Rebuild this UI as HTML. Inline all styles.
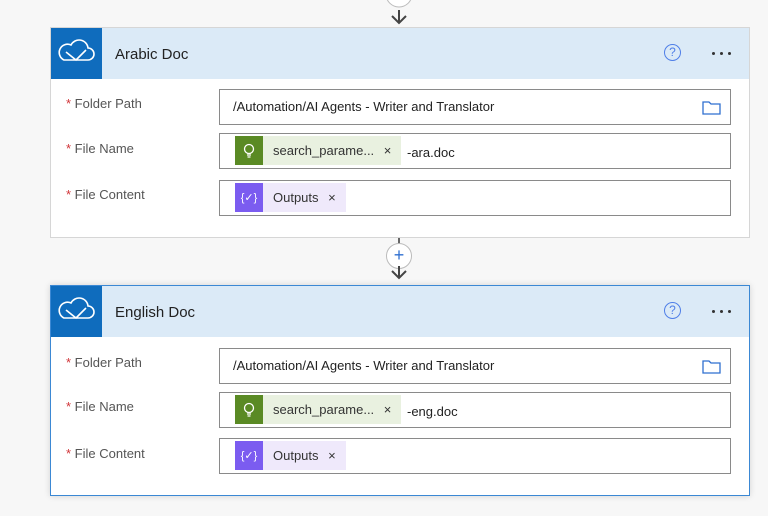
<!DOCTYPE html><html><head><style>
body{margin:0;width:768px;height:516px;background:#f7f7f7;font-family:"Liberation Sans",sans-serif;position:relative;overflow:hidden}
.card{position:absolute;left:50px;width:698px;background:#fff;border:1px solid #d6d6d6}
.card.sel{border:1px solid #3b88d4;box-shadow:0 0 6px rgba(0,0,0,.15)}
.hd{height:51px;background:#dbeaf7;position:relative}
.ic{position:absolute;left:0;top:0;width:51px;height:51px;background:#0f6cbd}
.ti{position:absolute;left:64px;top:18px;font-size:15px;color:#222}
.q{position:absolute;left:613px;top:16px;width:15px;height:15px;border:1.5px solid #4f7fe8;border-radius:50%;color:#4f7fe8;font-size:12px;text-align:center;line-height:15px}
.dots{position:absolute;left:661px;top:24px;height:3px;display:flex;gap:5px}
.dots i{display:block;width:3px;height:3px;border-radius:50%;background:#333}
.lb{position:absolute;left:15px;font-size:13px;color:#555}
.lb b{color:#d13438;font-weight:normal}
.in{position:absolute;left:168px;width:510px;height:34px;border:1px solid #8a8a8a;background:#fff;font-size:13px;color:#222}
.tok{position:absolute;left:15px;top:2px;height:29px;display:flex;align-items:center;font-size:13px;color:#333}
.tok .ti2{width:28px;height:29px;display:flex;align-items:center;justify-content:center;color:#fff;font-size:11px}
.plus{position:absolute;left:386px;width:24px;height:24px;border:1px solid #bbb;border-radius:50%;background:#fff;color:#2f6fd0;text-align:center;line-height:23px;font-size:18px}
</style></head><body>
<svg style="position:absolute;left:385px;top:0" width="30" height="30"><circle cx="14" cy="-6" r="13" fill="#fff" stroke="#bbb"/><path d="M7 16l7 7 7-7M14 10v13" stroke="#444" stroke-width="2" fill="none"/></svg>
<div style="position:absolute;left:398px;top:236px;width:2px;height:8px;background:#666"></div>
<div class="plus" style="top:243px">+</div>
<svg style="position:absolute;left:385px;top:266px" width="30" height="18"><path d="M7 5l7 7 7-7M14 0v12" stroke="#444" stroke-width="2" fill="none"/></svg>

<div class="card" style="top:27px;height:209px">
<div class="hd"><div class="ic"><svg width="51" height="51"><path d="M13 32h24a6 6 0 0 0 0-12 9 9 0 0 0-17-3 7 7 0 0 0-7 15z M15 24l10 8 10-10" stroke="#fff" stroke-width="1.6" fill="none"/></svg></div>
<div class="ti">Arabic Doc</div><div class="q">?</div><div class="dots"><i></i><i></i><i></i></div></div>
<div class="lb" style="top:68px"><b>*</b> Folder Path</div>
<div class="in" style="top:61px"><span style="position:absolute;left:13px;top:9px">/Automation/AI Agents - Writer and Translator</span><svg style="position:absolute;left:482px;top:9px" width="20" height="16"><path d="M1 3h6l2 2h9v10H1z" stroke="#2f6fd0" fill="none" stroke-width="1.3"/></svg></div>
<div class="lb" style="top:113px"><b>*</b> File Name</div>
<div class="in" style="top:105px"><div class="tok" style="background:#e9f1e0"><div class="ti2" style="background:#5a8a24"><svg width="14" height="16"><circle cx="7" cy="6" r="4.5" stroke="#fff" fill="none" stroke-width="1.3"/><path d="M5 12h4M5.5 14h3" stroke="#fff" stroke-width="1.3"/></svg></div><span style="padding:0 10px">search_parame... <span style="margin-left:6px">×</span></span></div><span style="position:absolute;left:187px;top:11px">-ara.doc</span></div>
<div class="lb" style="top:159px"><b>*</b> File Content</div>
<div class="in" style="top:152px"><div class="tok" style="background:#efe9fb"><div class="ti2" style="background:#7b5cf0">{✓}</div><span style="padding:0 10px">Outputs <span style="margin-left:6px">×</span></span></div></div>
</div>

<div class="card sel" style="top:285px;height:209px">
<div class="hd"><div class="ic"><svg width="51" height="51"><path d="M13 32h24a6 6 0 0 0 0-12 9 9 0 0 0-17-3 7 7 0 0 0-7 15z M15 24l10 8 10-10" stroke="#fff" stroke-width="1.6" fill="none"/></svg></div>
<div class="ti">English Doc</div><div class="q">?</div><div class="dots"><i></i><i></i><i></i></div></div>
<div class="lb" style="top:69px"><b>*</b> Folder Path</div>
<div class="in" style="top:62px"><span style="position:absolute;left:13px;top:9px">/Automation/AI Agents - Writer and Translator</span><svg style="position:absolute;left:482px;top:9px" width="20" height="16"><path d="M1 3h6l2 2h9v10H1z" stroke="#2f6fd0" fill="none" stroke-width="1.3"/></svg></div>
<div class="lb" style="top:113px"><b>*</b> File Name</div>
<div class="in" style="top:106px"><div class="tok" style="background:#e9f1e0"><div class="ti2" style="background:#5a8a24"><svg width="14" height="16"><circle cx="7" cy="6" r="4.5" stroke="#fff" fill="none" stroke-width="1.3"/><path d="M5 12h4M5.5 14h3" stroke="#fff" stroke-width="1.3"/></svg></div><span style="padding:0 10px">search_parame... <span style="margin-left:6px">×</span></span></div><span style="position:absolute;left:187px;top:11px">-eng.doc</span></div>
<div class="lb" style="top:160px"><b>*</b> File Content</div>
<div class="in" style="top:152px"><div class="tok" style="background:#efe9fb"><div class="ti2" style="background:#7b5cf0">{✓}</div><span style="padding:0 10px">Outputs <span style="margin-left:6px">×</span></span></div></div>
</div>
</body></html>
